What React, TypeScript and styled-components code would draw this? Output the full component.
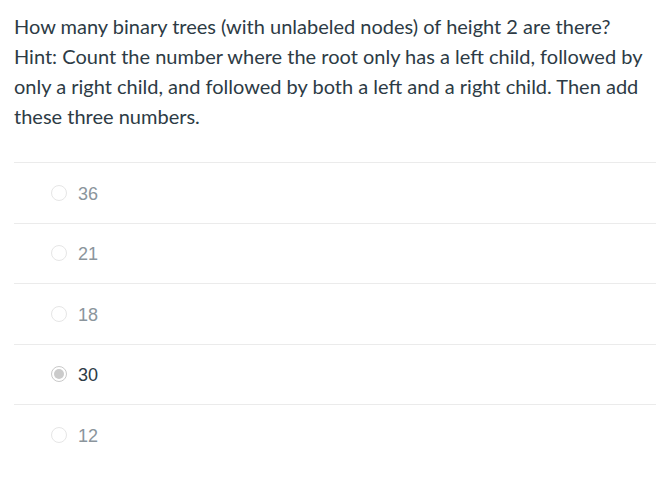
import styled, { createGlobalStyle } from "styled-components";

const Global = createGlobalStyle`
  body {
    margin: 0;
    background: #fff;
  }
`

const Page = styled.div`
  padding: 11px 11px 0 14px;
`

const Question = styled.p`
  margin: 0 0 31px;
  font-family: Lato, "Open Sans", sans-serif;
  font-size: 20px;
  line-height: 30px;
  color: #2d3b45;
`

const Options = styled.div`
  display: flex;
  flex-direction: column;
`

const Option = styled.label`
  display: flex;
  align-items: center;
  gap: 11px;
  height: 60.5px;
  box-sizing: border-box;
  padding-left: 37px;
  border-top: 1px solid #ebebeb;
`

const Radio = styled.span<{ $checked?: boolean }>`
  width: 16px;
  height: 16px;
  box-sizing: border-box;
  border-radius: 50%;
  border: 1px solid ${p => (p.$checked ? "#c9c9c9" : "#e6e6e6")};
  background: #fff;
  display: flex;
  align-items: center;
  justify-content: center;
  &::after {
    content: "";
    display: ${p => (p.$checked ? "block" : "none")};
    width: 10px;
    height: 10px;
    border-radius: 50%;
    background: #cbcbcb;
  }
`

const Answer = styled.span<{ $checked?: boolean }>`
  padding-top: 3px;
  font-family: "Liberation Sans", Arial, sans-serif;
  font-size: 18px;
  color: ${p => (p.$checked ? "#2d3b45" : "#8b959c")};
`

const answers = ["36", "21", "18", "30", "12"]
const selected = "30"

function App() {
  return (
    <>
      <Global />
      <Page>
        <Question>
          How many binary trees (with unlabeled nodes) of height 2 are there?
          <br />
          Hint: Count the number where the root only has a left child, followed by only a right child, and followed by both a left and a right child. Then add these three numbers.
        </Question>
        <Options>
          {answers.map(a => (
            <Option key={a}>
              <Radio $checked={a === selected} />
              <Answer $checked={a === selected}>{a}</Answer>
            </Option>
          ))}
        </Options>
      </Page>
    </>
  )
}

export default App;
